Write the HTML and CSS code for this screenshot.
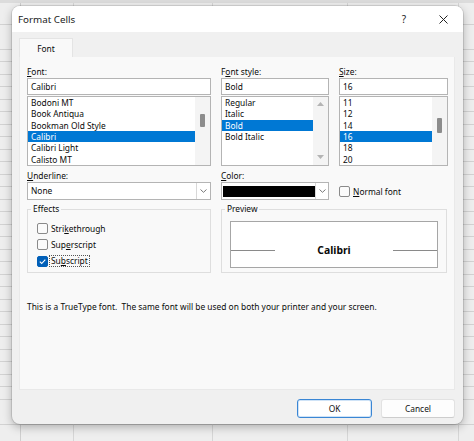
FILE: index.html
```
<!DOCTYPE html>
<html>
<head>
<meta charset="utf-8">
<link rel="stylesheet" href="styles.css">
</head>
<body>
<div class="dialog">
  <div class="titlebar">
    <span class="title">Format Cells</span>
    <span class="help">?</span>
    <span class="close"><svg width="9" height="9" viewBox="0 0 9 9"><path d="M0.5 0.5L8.5 8.5M8.5 0.5L0.5 8.5" stroke="#222" stroke-width="1" fill="none"/></svg></span>
  </div>
  <div class="tabs"><div class="tab">Font</div></div>
  <div class="panel">
    <div class="grid">
      <div class="col">
        <div class="lbl"><u>F</u>ont:</div>
        <div class="input">Calibri</div>
        <div class="list">
          <div class="items">
            <div class="item">Bodoni MT</div>
            <div class="item">Book Antiqua</div>
            <div class="item">Bookman Old Style</div>
            <div class="item sel">Calibri</div>
            <div class="item">Calibri Light</div>
            <div class="item">Calisto MT</div>
          </div>
          <div class="sbar"><div class="thumb t-font"></div></div>
        </div>
      </div>
      <div class="col">
        <div class="lbl">F<u>o</u>nt style:</div>
        <div class="input">Bold</div>
        <div class="list">
          <div class="items">
            <div class="item">Regular</div>
            <div class="item">Italic</div>
            <div class="item sel">Bold</div>
            <div class="item">Bold Italic</div>
          </div>
          <div class="sbar sbar-arrows">
            <svg width="7" height="4" viewBox="0 0 7 4"><path d="M0 4L3.5 0L7 4Z" fill="#b4b4b4"/></svg>
            <svg width="7" height="4" viewBox="0 0 7 4"><path d="M0 0L3.5 4L7 0Z" fill="#b4b4b4"/></svg>
          </div>
        </div>
      </div>
      <div class="col">
        <div class="lbl"><u>S</u>ize:</div>
        <div class="input">16</div>
        <div class="list">
          <div class="items">
            <div class="item">11</div>
            <div class="item">12</div>
            <div class="item">14</div>
            <div class="item sel">16</div>
            <div class="item">18</div>
            <div class="item">20</div>
          </div>
          <div class="sbar"><div class="thumb t-size"></div></div>
        </div>
      </div>

      <div class="col">
        <div class="lbl lbl2"><u>U</u>nderline:</div>
        <div class="select">
          <div class="val">None</div>
          <div class="arr"><svg width="7" height="4" viewBox="0 0 7 4"><path d="M0.5 0.5L3.5 3.3L6.5 0.5" stroke="#777" fill="none"/></svg></div>
        </div>
      </div>
      <div class="col">
        <div class="lbl lbl2"><u>C</u>olor:</div>
        <div class="select">
          <div class="val"><div class="swatch"></div></div>
          <div class="arr"><svg width="7" height="4" viewBox="0 0 7 4"><path d="M0.5 0.5L3.5 3.3L6.5 0.5" stroke="#777" fill="none"/></svg></div>
        </div>
      </div>
      <div class="col col-normal">
        <div class="chk"><span class="cb"></span><span><u>N</u>ormal font</span></div>
      </div>

      <fieldset class="group effects">
        <legend>Effects</legend>
        <div class="chk row1"><span class="cb"></span><span>Stri<u>k</u>ethrough</span></div>
        <div class="chk"><span class="cb"></span><span>Sup<u>e</u>rscript</span></div>
        <div class="chk"><span class="cb on"><svg width="9" height="9" viewBox="0 0 9 9"><path d="M1.8 4.6L3.7 6.5L7.3 2.6" stroke="#fff" stroke-width="1.1" fill="none"/></svg></span><span class="focus">Su<u>b</u>script</span></div>
      </fieldset>
      <fieldset class="group preview">
        <legend>Preview</legend>
        <div class="pv-box">
          <div class="pv-line"></div>
          <div class="pv-text">Calibri</div>
          <div class="pv-line"></div>
        </div>
      </fieldset>
    </div>
    <p class="desc">This is a TrueType font.&nbsp; The same font will be used on both your printer and your screen.</p>
  </div>
  <div class="footer">
    <button class="btn ok">OK</button>
    <button class="btn">Cancel</button>
  </div>
</div>
</body>
</html>
```
FILE: styles.css
```
* { box-sizing: border-box; }

html, body {
  margin: 0;
  width: 474px;
  height: 441px;
  overflow: hidden;
}

body {
  font-family: "Noto Sans", "Open Sans", sans-serif;
  font-size: 8.4px;
  color: #0a0a0a;
  padding-top: 6px;
  background-color: #eeeeee;
  background-image:
    linear-gradient(to bottom, #dcdcdc 0, #dcdcdc 3px, transparent 3px),
    linear-gradient(to right, transparent 19.5px, #cfcfcf 19.5px, #cfcfcf 20.5px, transparent 20.5px),
    linear-gradient(to right, transparent 72.5px, #d6d6d6 72.5px, #d6d6d6 73.5px, transparent 73.5px),
    linear-gradient(to right, transparent 211.5px, #d6d6d6 211.5px, #d6d6d6 212.5px, transparent 212.5px),
    linear-gradient(to right, transparent 346.5px, #d6d6d6 346.5px, #d6d6d6 347.5px, transparent 347.5px),
    linear-gradient(to right, transparent 457.5px, #d6d6d6 457.5px, #d6d6d6 458.5px, transparent 458.5px),
    repeating-linear-gradient(to bottom, transparent 0, transparent 11.5px, #d2d2d2 11.5px, #d2d2d2 12.5px);
}

.dialog {
  margin-left: 12px;
  width: 451px;
  height: 418px;
  border-radius: 8px;
  background: #f0f0f0;
  overflow: hidden;
  box-shadow: 0 0 0 1px rgba(0,0,0,0.10), 0 3px 10px rgba(0,0,0,0.28);
}

.titlebar {
  height: 26px;
  background: #ffffff;
  display: flex;
  align-items: center;
  padding-left: 6px;
  padding-right: 8px;
}
.title { flex: 1; font-size: 9.8px; color: #1b1b1b; }
.help { width: 20px; text-align: center; font-size: 10px; color: #222; margin-right: 17px; }
.close { width: 24px; display: flex; justify-content: center; align-items: center; }

.tabs { height: 25px; padding: 6px 0 0 7px; }
.tab {
  width: 54px;
  height: 19px;
  background: #f9f9f9;
  border: 1px solid #e4e4e4;
  border-bottom: none;
  display: flex;
  align-items: center;
  justify-content: center;
  font-size: 8.4px;
}

.panel {
  margin-left: 7px;
  width: 436px;
  height: 333px;
  background: #f9f9f9;
  border: 1px solid #e9e9e9;
  border-top: none;
  padding: 8px 7px 0 7px;
}

.grid {
  display: grid;
  grid-template-columns: 184px 108px 109px;
  column-gap: 10px;
}

.col { display: flex; flex-direction: column; }

.lbl { height: 13px; line-height: 13px; }
.lbl2 { margin-top: 3px; }
u { text-decoration-thickness: 1px; text-underline-offset: 1px; }

.input {
  height: 17px;
  line-height: 15px;
  border: 1px solid #b4b4b4;
  background: #fff;
  padding-left: 3px;
}

.list {
  margin-top: 1px;
  height: 70px;
  border: 1px solid #b4b4b4;
  background: #fff;
  display: flex;
}
.items { flex: 1; }
.item { height: 11.33px; line-height: 11.33px; padding-left: 3px; white-space: nowrap; }
.item.sel { background: #0078d4; color: #fff; }

.sbar { width: 15px; background: #f4f4f4; }
.thumb { width: 5px; margin-left: 5px; background: #8c8c8c; border-radius: 1px; }
.t-font { margin-top: 17px; height: 13px; }
.t-size { margin-top: 21px; height: 15px; }
.sbar-arrows {
  display: flex;
  flex-direction: column;
  align-items: center;
  justify-content: space-between;
  padding: 5px 0 6px;
}

.select {
  height: 18px;
  border: 1px solid #b4b4b4;
  background: #fff;
  display: flex;
}
.select .val { flex: 1; line-height: 16px; padding-left: 3px; }
.select .arr {
  width: 14px;
  border-left: 1px solid #d8d8d8;
  display: flex;
  align-items: center;
  justify-content: center;
}
.swatch { margin: 3px 0 0 -2px; width: 92px; height: 11px; background: #000; }

.col-normal { justify-content: flex-end; }
.chk { display: flex; align-items: center; height: 16.5px; }
.col-normal .chk { height: 18px; }
.cb {
  width: 11px;
  height: 11px;
  border: 1px solid #8a8a8a;
  border-radius: 2px;
  background: #fbfbfb;
  margin-right: 3px;
  display: flex;
  align-items: center;
  justify-content: center;
  flex: none;
}
.cb.on { background: #005fb8; border-color: #005fb8; }
.focus { border: 1px dotted #555; padding: 0 1px; margin-left: -2px; line-height: 10px; }

.group {
  margin: 4px 0 0 0;
  padding: 0 3px;
  border: 1px solid #dedede;
  height: 69px;
  min-width: 0;
}
.group legend { padding: 0 2px; line-height: 10px; font-size: 8.4px; }
.effects { padding-left: 9px; }
.effects legend { margin-left: -6px; }
.effects .row1 { margin-top: 6px; }
.preview { grid-column: 2 / 4; margin-right: 1px; }

.pv-box {
  margin: 7px 0 0 5px;
  width: 208px;
  height: 47px;
  background: #fff;
  border: 1px solid #a6a6a6;
  display: flex;
  align-items: flex-start;
}
.pv-line { width: 44px; height: 1px; background: #8a8a8a; margin-top: 28px; flex: none; }
.pv-text { flex: 1; text-align: center; font-weight: bold; font-size: 10.4px; margin-top: 21px; line-height: 14px; }

.desc { margin: 28px 0 0 0; line-height: 12px; }

.footer {
  display: flex;
  justify-content: flex-end;
  gap: 9px;
  padding: 9px 8px 0 0;
}
.btn {
  width: 75px;
  height: 19px;
  font-family: "Noto Sans", "Open Sans", sans-serif;
  font-size: 8.4px;
  color: #111;
  background: #fdfdfd;
  border: 1px solid #e2e2e2;
  border-bottom-color: #cdcdcd;
  border-radius: 3px;
  padding: 0;
}
.btn.ok { border: 1px solid #3a86d4; box-shadow: inset 0 0 0 1px #cfe3f7; background: #fff; }
.btn:last-child { width: 74px; }
```
